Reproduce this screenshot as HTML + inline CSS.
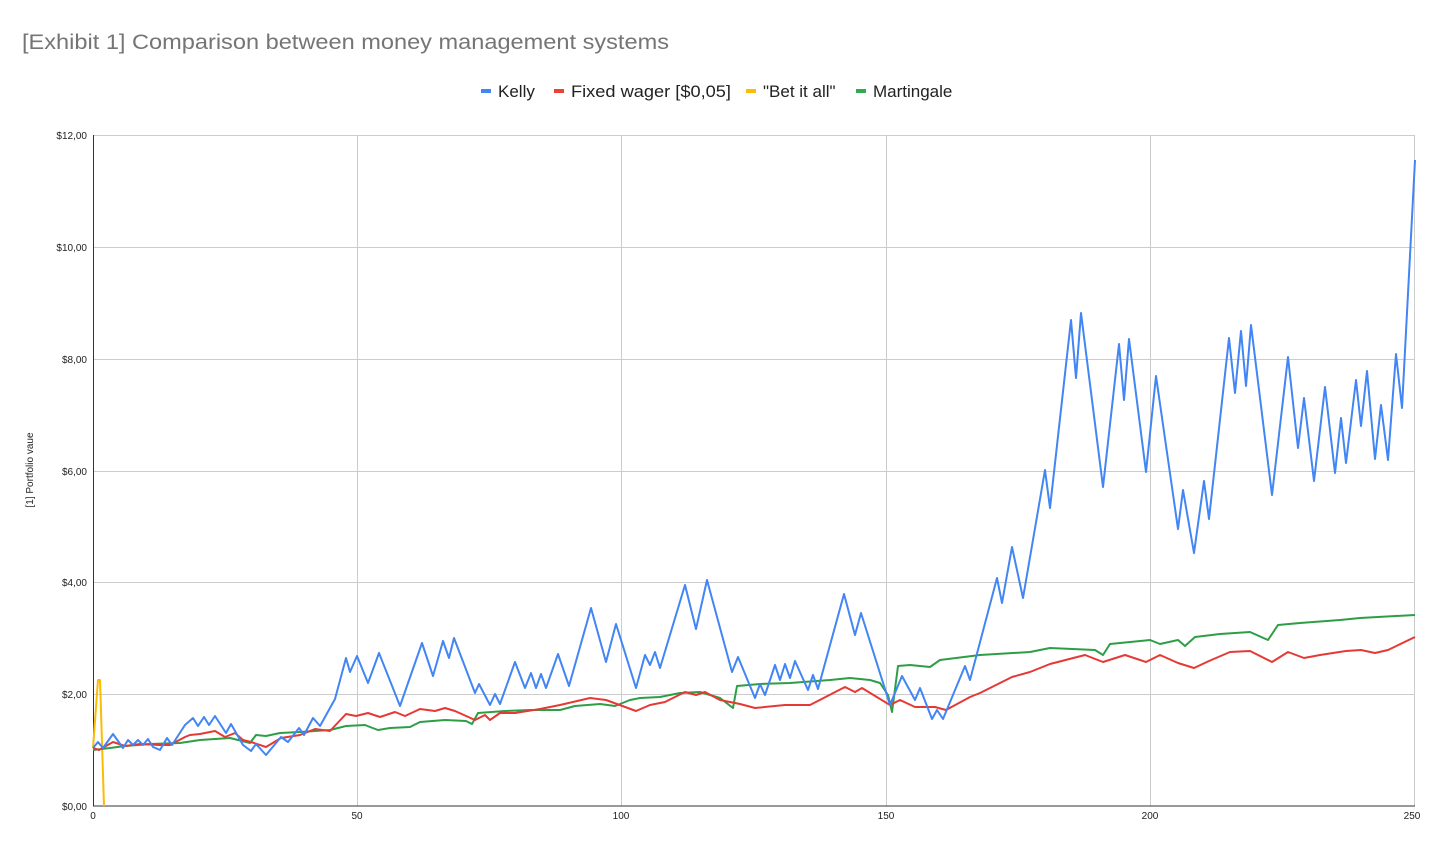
<!DOCTYPE html>
<html><head><meta charset="utf-8"><style>
body{margin:0;background:#fff;width:1456px;height:841px;overflow:hidden;font-family:"Liberation Sans",Arial,sans-serif}
</style></head><body>
<svg width="1456" height="841" xmlns="http://www.w3.org/2000/svg" font-family="Liberation Sans, Arial, sans-serif">
<text x="22" y="49" font-size="21" fill="#757575" textLength="647" lengthAdjust="spacingAndGlyphs">[Exhibit 1] Comparison between money management systems</text>
<g font-size="17" fill="#222">
<rect x="481" y="89" width="10" height="4" fill="#4285f4"/><text x="498" y="97">Kelly</text>
<rect x="554" y="89" width="10" height="4" fill="#ea4335"/><text x="571" y="97" textLength="160" lengthAdjust="spacingAndGlyphs">Fixed wager [$0,05]</text>
<rect x="746" y="89" width="10" height="4" fill="#fbbc04"/><text x="763" y="97">"Bet it all"</text>
<rect x="856" y="89" width="10" height="4" fill="#34a853"/><text x="873" y="97">Martingale</text>
</g>
<g stroke="#ccc" stroke-width="1">
<line x1="93" y1="135.5" x2="1415" y2="135.5"/><line x1="93" y1="247.5" x2="1415" y2="247.5"/>
<line x1="93" y1="359.5" x2="1415" y2="359.5"/><line x1="93" y1="471.5" x2="1415" y2="471.5"/>
<line x1="93" y1="582.5" x2="1415" y2="582.5"/><line x1="93" y1="694.5" x2="1415" y2="694.5"/>
<line x1="357.5" y1="135" x2="357.5" y2="806"/><line x1="621.5" y1="135" x2="621.5" y2="806"/>
<line x1="886.5" y1="135" x2="886.5" y2="806"/><line x1="1150.5" y1="135" x2="1150.5" y2="806"/>
<line x1="1414.5" y1="135" x2="1414.5" y2="806"/>
</g>
<line x1="93" y1="806" x2="1415" y2="806" stroke="#333" stroke-width="1"/>
<line x1="93.5" y1="135" x2="93.5" y2="806" stroke="#333" stroke-width="1"/>
<g font-size="10" fill="#222" text-anchor="end">
<text x="87" y="139">$12,00</text><text x="87" y="251">$10,00</text><text x="87" y="363">$8,00</text>
<text x="87" y="475">$6,00</text><text x="87" y="586">$4,00</text><text x="87" y="698">$2,00</text><text x="87" y="810">$0,00</text>
</g>
<g font-size="10" fill="#222" text-anchor="middle">
<text x="93" y="819">0</text><text x="357" y="819">50</text><text x="621" y="819">100</text><text x="886" y="819">150</text><text x="1150" y="819">200</text><text x="1412" y="819">250</text>
</g>
<text transform="translate(33,470) rotate(-90)" font-size="10" fill="#222" text-anchor="middle">[1] Portfolio vaue</text>
<g fill="none" stroke-width="2" stroke-linejoin="round">
<polyline stroke="#fbbc04" points="93,748 98,680 100,680 104,806"/>
<polyline stroke="#2e9e46" points="93,750 110,748 125,746 150,744 180,743 200,740 230,738 250,743 256,735 266,736 280,733 300,732 330,730 346,726 365,725 370,727 378,730 390,728 410,727 420,722 445,720 466,721 472,724 478,713 505,711 530,710 560,710 575,706 600,704 615,706 630,700 640,698 660,697 680,693 700,692 720,698 733,708 737,686 760,684 790,683 830,680 850,678 870,680 880,683 888,695 892,712 898,666 910,665 930,667 940,660 980,655 1030,652 1050,648 1095,650 1103,655 1110,644 1150,640 1160,644 1178,640 1185,646 1195,637 1220,634 1250,632 1268,640 1278,625 1300,623 1340,620 1360,618 1415,615"/>
<polyline stroke="#e53935" points="93,748 99,750 113,742 125,746 140,744 160,745 170,745 185,737 190,735 200,734 215,731 225,737 235,733 243,740 251,742 266,747 281,738 300,735 315,729 330,731 346,714 356,716 368,713 380,717 395,712 405,716 420,709 435,711 445,708 455,711 475,720 485,715 490,720 500,713 515,713 540,709 560,705 590,698 606,700 636,711 650,705 665,702 685,692 696,695 705,692 720,700 740,704 755,708 785,705 810,705 845,687 855,692 862,688 890,705 900,700 915,707 935,707 946,710 970,697 980,693 1000,683 1012,677 1030,672 1050,664 1085,655 1103,662 1125,655 1146,662 1160,655 1178,663 1194,668 1209,661 1230,652 1250,651 1272,662 1288,652 1304,658 1320,655 1346,651 1361,650 1375,653 1388,650 1415,637"/>
<polyline stroke="#4285f4" points="93,748 98,742 103,748 113,734 123,748 128,740 133,745 138,740 143,745 148,739 153,747 160,750 167,738 172,745 185,725 193,718 198,726 204,717 209,725 215,716 226,733 231,724 243,745 251,751 256,744 266,755 281,737 288,742 299,728 304,735 313,718 320,726 335,699 346,658 350,672 357,656 368,683 379,653 400,706 422,643 433,676 443,641 449,658 454,638 475,693 479,684 490,705 495,694 500,704 515,662 525,688 531,673 536,688 541,674 546,688 558,654 569,686 591,608 606,662 616,624 636,688 645,655 650,665 655,652 660,668 685,585 696,629 707,580 732,672 738,657 755,698 760,684 765,695 775,665 780,680 785,664 790,678 795,661 808,690 813,675 818,689 844,594 855,635 861,613 890,705 902,676 915,700 920,688 932,719 937,710 943,719 965,666 970,680 997,578 1002,603 1012,547 1023,598 1045,470 1050,508 1071,320 1076,378 1081,313 1103,487 1119,344 1124,400 1129,339 1146,472 1156,376 1178,529 1183,490 1194,553 1204,481 1209,519 1229,338 1235,393 1241,331 1246,386 1251,325 1272,495 1288,357 1298,448 1304,398 1314,481 1325,387 1335,473 1341,418 1346,463 1356,380 1361,426 1367,371 1375,459 1381,405 1388,460 1396,354 1402,408 1415,160"/>
</g>
</svg>
</body></html>
